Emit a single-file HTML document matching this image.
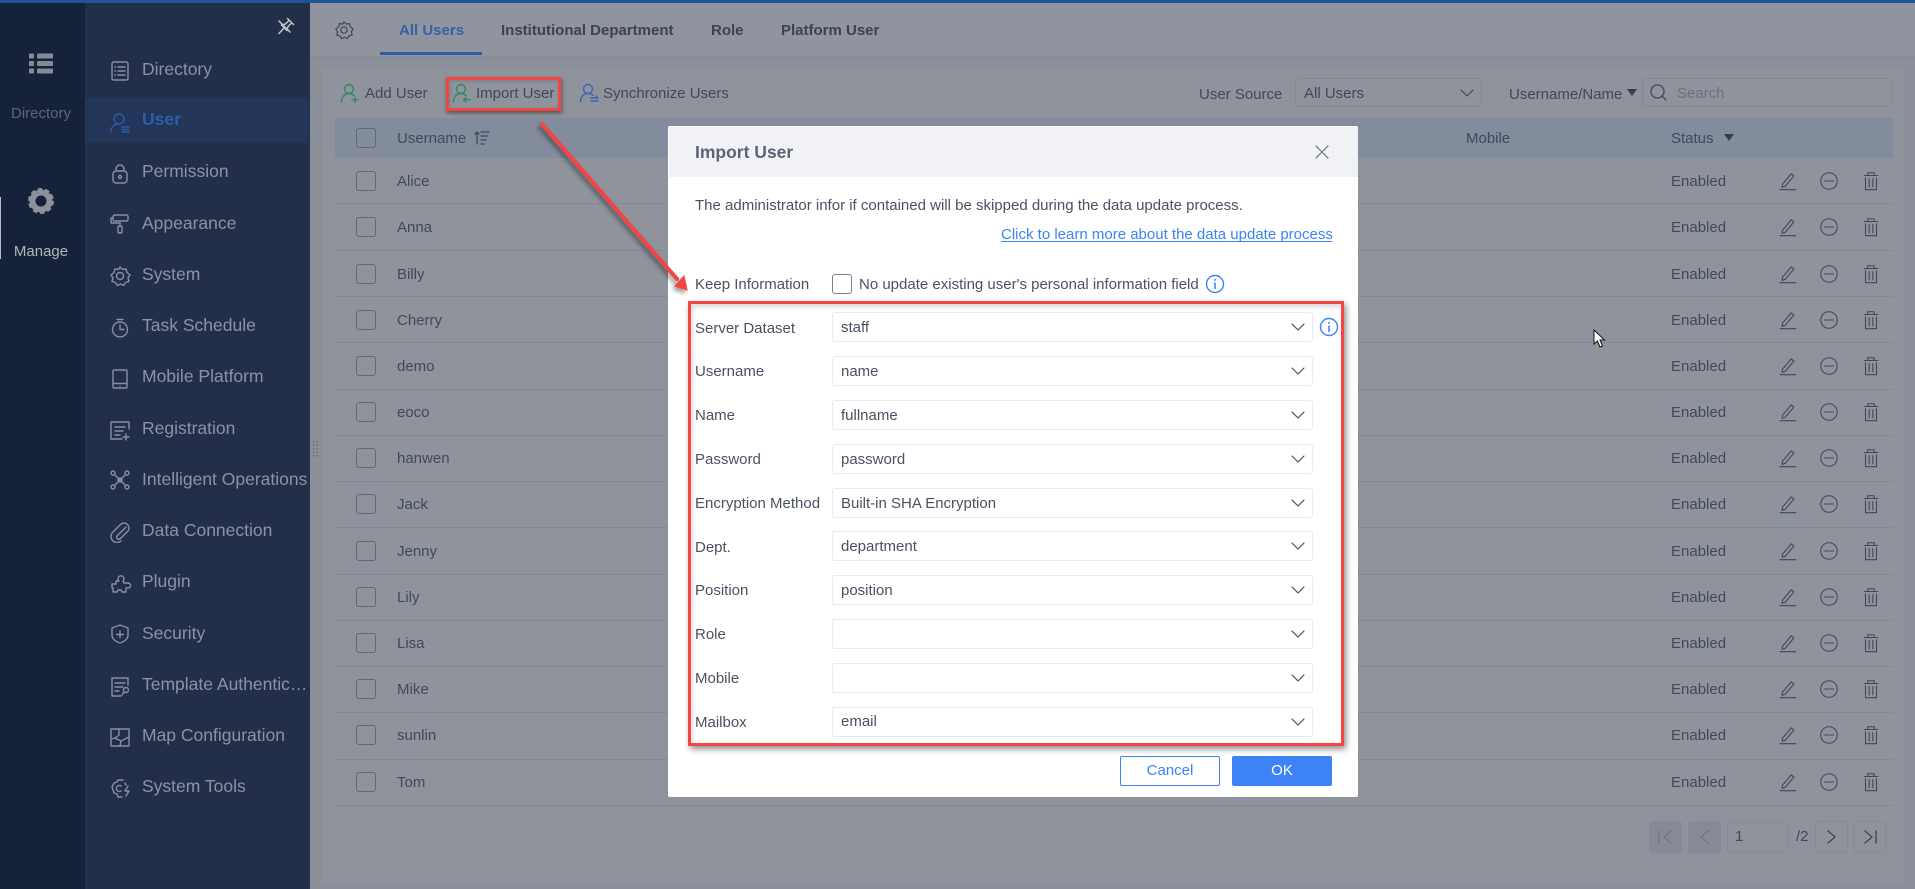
<!DOCTYPE html>
<html><head><meta charset="utf-8"><title>Import User</title>
<style>
*{box-sizing:border-box}
html,body{margin:0;padding:0;width:1915px;height:889px;overflow:hidden;background:#8e939c;font-family:"Liberation Sans",sans-serif}
.a{position:absolute}
.t{position:absolute;white-space:nowrap;line-height:20px;height:20px;font-size:15px;color:#41485b;margin-top:1px}
.nav{font-size:17.5px;color:#8b93a3;left:142px;line-height:24px;height:24px;margin-top:0}
.ic{position:absolute;fill:none;stroke-linecap:round;stroke-linejoin:round}
.nv{stroke:#8790a0;stroke-width:1.4;width:22px;height:22px;left:109px}
.cb{position:absolute;width:20px;height:20px;border:1px solid #62697a;border-radius:3px;left:356px}
.ln{position:absolute;left:335px;width:1558px;height:1px;background:#7f8aa1}
.sel{position:absolute;left:832px;width:481px;height:30px;background:#fff;border:1px solid #e8eaee;border-radius:3px;font-size:15px;line-height:29px;padding-left:8px;color:#4a5162}
.lab{left:695px;color:#4a5162}
.pg{position:absolute;top:821px;height:32px;width:33px;border:1px solid #848b99;border-radius:3px}
</style></head><body>
<svg width="0" height="0" style="position:absolute">
<symbol id="ed" viewBox="-1 -1 24 24"><path d="M5 14.5 14.5 3.2l2.9 2.4-9.5 11.3-3.4 1z"/><path d="M2.5 20.5h17"/></symbol>
<symbol id="mi" viewBox="-1 -1 24 24"><circle cx="11" cy="11" r="9"/><path d="M6 11h10"/></symbol>
<symbol id="tr" viewBox="-1 -1 24 24"><path d="M3.5 5h15M7.500 5V2h7v3M5 7.500V20.500h12V7.500M9 8.500v9M13 8.500v9"/></symbol>
<symbol id="ch" viewBox="0 0 14 8"><path d="M1 1l6 6 6-6"/></symbol>
</svg>

<!-- left rail -->
<div class="a" style="left:0;top:0;width:85px;height:889px;background:#16213a"></div>
<!-- second nav -->
<div class="a" style="left:85px;top:0;width:225px;height:889px;background:#232f48"></div>
<div class="a" style="left:85px;top:98px;width:224px;height:45px;background:#233558"></div>
<!-- top stripe -->
<div class="a" style="left:0;top:0;width:1915px;height:3px;background:#1f5596"></div>

<svg class="a" style="left:28px;top:52px" width="26" height="23"><g fill="#838a98"><rect x="1" y="1.5" width="5" height="5" rx="1"/><rect x="9" y="1.5" width="16" height="5" rx="1"/><rect x="1" y="9" width="5" height="5" rx="1"/><rect x="9" y="9" width="16" height="5" rx="1"/><rect x="1" y="16.500" width="5" height="5" rx="1"/><rect x="9" y="16.500" width="16" height="5" rx="1"/></g></svg>
<div class="t" style="left:0;width:82px;text-align:center;top:103px;color:#5d6677">Directory</div>
<div class="a" style="left:0;top:197px;width:1px;height:62px;background:#b5b9c1"></div>
<svg class="a" style="left:27px;top:187px" width="28" height="28" viewBox="0 0 28 28"><circle cx="14" cy="14" r="8.500" fill="none" stroke="#8b909b" stroke-width="6"/><circle cx="14" cy="14" r="10.500" fill="none" stroke="#8b909b" stroke-width="5" stroke-dasharray="4 2.600"/></svg>
<div class="t" style="left:0;width:82px;text-align:center;top:241px;color:#b1b5bd">Manage</div>

<svg class="ic" style="left:276px;top:16px;stroke:#c2c5cc;stroke-width:1.500" width="20" height="20" viewBox="0 0 20 20"><path d="M11.500 2.500l6 6M13 4.500l-3.500 3.500-4 1 5.500 5.500 1-4 3.500-3.500M7.500 12.500l-4.500 5M3 5l11 11"/></svg>

<!-- sidebar text -->
<div class="t nav" style="top:57px">Directory</div>
<div class="t nav" style="top:107px;color:#2c5ea9;font-weight:bold">User</div>
<div class="t nav" style="top:159px">Permission</div>
<div class="t nav" style="top:211px">Appearance</div>
<div class="t nav" style="top:262px">System</div>
<div class="t nav" style="top:313px">Task Schedule</div>
<div class="t nav" style="top:364px">Mobile Platform</div>
<div class="t nav" style="top:416px">Registration</div>
<div class="t nav" style="top:467px">Intelligent Operations</div>
<div class="t nav" style="top:518px">Data Connection</div>
<div class="t nav" style="top:569px">Plugin</div>
<div class="t nav" style="top:621px">Security</div>
<div class="t nav" style="top:672px">Template Authentic…</div>
<div class="t nav" style="top:723px">Map Configuration</div>
<div class="t nav" style="top:774px">System Tools</div>

<!-- sidebar icons -->
<svg class="ic nv" style="top:60px" viewBox="0 0 22 22"><rect x="3" y="2" width="16" height="18" rx="1.500"/><path d="M9 7h7M9 11h7M9 15h7M6 7h.5M6 11h.5M6 15h.5"/></svg>
<svg class="ic nv" style="top:112px;stroke:#2c5ea9" viewBox="0 0 22 22"><circle cx="10" cy="7" r="5"/><path d="M2 20c0-5 3-8 7-8M13 15h7M13 17.500h7M13 20h7"/></svg>
<svg class="ic nv" style="top:163px" viewBox="0 0 22 22"><rect x="4" y="8" width="14" height="12" rx="3"/><path d="M7 8V6a4 4 0 0 1 8 0v2"/><circle cx="11" cy="14" r="1.500"/></svg>
<svg class="ic nv" style="top:213px" viewBox="0 0 22 22"><rect x="4" y="2" width="15" height="6" rx="1.500"/><path d="M4 5H2v5h9v3"/><rect x="9" y="13" width="4" height="7" rx="1"/></svg>
<svg class="ic nv" style="top:265px" viewBox="0 0 22 22"><path d="M11 2l2.500 2.500 3.500-.5 1 3.500 3 2.500-2 3 1 3.500-3.500 1-2 3-3-1.500-3 1.500-2-3-3.500-1 1-3.500-2-3 3-2.500 1-3.500 3.500.5z"/><circle cx="11" cy="11" r="3.500"/></svg>
<svg class="ic nv" style="top:317px" viewBox="0 0 22 22"><circle cx="11" cy="12.500" r="7.500"/><path d="M11 8v4.500h4M8 2.500h6"/></svg>
<svg class="ic nv" style="top:368px" viewBox="0 0 22 22"><rect x="4" y="2" width="14" height="18" rx="1"/><path d="M4 15.500h14M11 18h.1"/></svg>
<svg class="ic nv" style="top:419px" viewBox="0 0 22 22"><path d="M20 10V3H2v17h11"/><path d="M6 8h10M6 12h8M6 16h5M17 15v6M14 18h6"/></svg>
<svg class="ic nv" style="top:469px" viewBox="0 0 22 22"><circle cx="4" cy="4" r="2"/><circle cx="18" cy="4" r="2"/><circle cx="4" cy="18" r="2"/><circle cx="18" cy="18" r="2"/><circle cx="11" cy="11" r="2"/><path d="M5.500 5.500 16.500 16.500M16.500 5.500 5.500 16.500"/></svg>
<svg class="ic nv" style="top:521px" viewBox="0 0 22 22"><path d="M17 6 8 15a2.200 2.200 0 0 0 3 3l8-8a5 5 0 0 0-7-7L4 11a6 6 0 0 0 8 9"/></svg>
<svg class="ic nv" style="top:572px;left:110px" viewBox="0 0 22 22"><path d="M3 20v-4h-1v-4h4V9h3a3 3 0 1 1 4 0l1 2h4a2.500 2.500 0 0 1 0 5h-2v4h-4l-1-2h-3l-1 2z"/></svg>
<svg class="ic nv" style="top:623px" viewBox="0 0 22 22"><path d="M11 2l8 3v7c0 4-4 7-8 8-4-1-8-4-8-8V5z"/><path d="M11 8v7M7.500 11.500h7"/></svg>
<svg class="ic nv" style="top:675px;left:110px" viewBox="0 0 22 22"><path d="M18 10V3H2v18h9M5 8h10M5 12h8M5 16h4"/><circle cx="16" cy="15" r="2.500"/><path d="M14 17l-2 3"/></svg>
<svg class="ic nv" style="top:726px" viewBox="0 0 22 22"><rect x="2" y="3" width="18" height="17"/><path d="M10 3v6l-4 3-4 1M6 12l6 3 8-4M12 15l-1 5"/></svg>
<svg class="ic nv" style="top:777px;left:110px" viewBox="0 0 22 22"><path d="M13 3H8L7 5 4 6 2 10l1 3 1 3 3 1 1 3h4M16 8l-1-2"/><path d="M11 9a3 3 0 1 0 0 5M18 9l-3 5h4l-3 5"/></svg>

<!-- main background -->
<div class="a" style="left:310px;top:3px;width:1605px;height:886px;background:#8a8f99"></div>
<div class="a" style="left:310px;top:3px;width:1605px;height:53px;background:#8f949e"></div>
<div class="a" style="left:310px;top:56px;width:1605px;height:1px;background:#858a95"></div>
<div class="a" style="left:322px;top:68px;width:1583px;height:815px;background:#8e939c"></div>
<svg class="a" style="left:313px;top:441px" width="6" height="16"><g fill="#6b7180"><rect x="0" y="0" width="1.500" height="1.500"/><rect x="3.500" y="0" width="1.500" height="1.500"/><rect x="0" y="3.500" width="1.500" height="1.500"/><rect x="3.500" y="3.500" width="1.500" height="1.500"/><rect x="0" y="7" width="1.500" height="1.500"/><rect x="3.500" y="7" width="1.500" height="1.500"/><rect x="0" y="10.500" width="1.500" height="1.500"/><rect x="3.500" y="10.500" width="1.500" height="1.500"/><rect x="0" y="14" width="1.500" height="1.500"/><rect x="3.500" y="14" width="1.500" height="1.500"/></g></svg>

<!-- tabs -->
<svg class="ic" style="left:334px;top:20px;stroke:#3f4657;stroke-width:1.300" width="20" height="20" viewBox="0 0 22 22"><path d="M11 2l2.500 2.500 3.500-.5 1 3.500 3 2.500-2 3 1 3.500-3.500 1-2 3-3-1.500-3 1.500-2-3-3.500-1 1-3.500-2-3 3-2.500 1-3.500 3.500.5z"/><circle cx="11" cy="11" r="3.500"/></svg>
<div class="t" style="left:399px;top:20px;font-weight:bold;color:#3761a8">All Users</div>
<div class="a" style="left:380px;top:52px;width:102px;height:3px;background:#2f5ea8"></div>
<div class="t" style="left:501px;top:20px;font-weight:bold;color:#3b4255">Institutional Department</div>
<div class="t" style="left:711px;top:20px;font-weight:bold;color:#3b4255">Role</div>
<div class="t" style="left:781px;top:20px;font-weight:bold;color:#3b4255">Platform User</div>

<!-- toolbar -->
<svg class="ic" style="left:340px;top:83px;stroke:#2d8a5f;stroke-width:1.400" width="20" height="20" viewBox="0 0 20 20"><circle cx="9" cy="6" r="4.500"/><path d="M1.500 19c0-5 3-8.500 7.500-8.500 2 0 3.500.5 5 2"/><path d="M15 14v5.500M12 16.700h6"/></svg>
<div class="t" style="left:365px;top:83px">Add User</div>
<svg class="ic" style="left:452px;top:83px;stroke:#2d8a5f;stroke-width:1.400" width="20" height="20" viewBox="0 0 20 20"><circle cx="9" cy="6" r="4.500"/><path d="M1.500 19c0-5 3-8.500 7.500-8.500 2 0 3.500.5 5 2"/><path d="M18.500 16.700H11.500M14 14.500l-2.500 2.200 2.500 2.200"/></svg>
<div class="t" style="left:476px;top:83px">Import User</div>
<svg class="ic" style="left:579px;top:83px;stroke:#3a66b5;stroke-width:1.400" width="20" height="20" viewBox="0 0 20 20"><circle cx="9" cy="6" r="4.500"/><path d="M1.500 19c0-5 3-8.500 7.500-8.500 2 0 3.500.5 5 2"/><path d="M12 15h7l-2-2M19 18h-7"/></svg>
<div class="t" style="left:603px;top:83px">Synchronize Users</div>
<div class="t" style="left:1199px;top:84px">User Source</div>
<div class="a" style="left:1295px;top:78px;width:187px;height:29px;border:1px solid #828997;border-radius:3px"></div>
<div class="t" style="left:1304px;top:83px">All Users</div>
<svg class="ic" style="left:1460px;top:89px;stroke:#41485b;stroke-width:1.200" width="14" height="8"><use href="#ch"/></svg>
<div class="t" style="left:1509px;top:84px">Username/Name</div>
<div class="a" style="left:1627px;top:89px;border-left:5px solid transparent;border-right:5px solid transparent;border-top:7px solid #363d50"></div>
<div class="a" style="left:1642px;top:78px;width:250px;height:29px;border:1px solid #828997;border-radius:3px"></div>
<svg class="ic" style="left:1649px;top:83px;stroke:#41485b;stroke-width:1.300" width="19" height="19"><circle cx="8.500" cy="8.500" r="6.500"/><path d="M13 13l4 4"/></svg>
<div class="t" style="left:1677px;top:83px;color:#6a7180">Search</div>

<!-- table head -->
<div class="a" style="left:335px;top:118px;width:1558px;height:40px;background:#828c9d"></div>
<div class="cb" style="top:128px"></div>
<div class="t" style="left:397px;top:128px">Username</div>
<svg class="ic" style="left:474px;top:130px;stroke:#41485b;stroke-width:1.300" width="16" height="15"><path d="M3 14V2M1 4l2-2 2 2M7 2h8M7 6h6.500M7 10h5M7 14h3"/></svg>
<div class="t" style="left:1466px;top:128px">Mobile</div>
<div class="t" style="left:1671px;top:128px">Status</div>
<div class="a" style="left:1724px;top:134px;border-left:5.500px solid transparent;border-right:5.500px solid transparent;border-top:7px solid #363d50"></div>

<!-- rows -->
<div class="cb" style="top:171px"></div><div class="t" style="left:397px;top:171px">Alice</div><div class="t" style="left:1671px;top:171px">Enabled</div><svg class="ic" style="left:1777px;top:170px;stroke:#41485b;stroke-width:1.200" width="22" height="22"><use href="#ed"/></svg><svg class="ic" style="left:1818px;top:170px;stroke:#41485b;stroke-width:1.200" width="22" height="22"><use href="#mi"/></svg><svg class="ic" style="left:1860px;top:170px;stroke:#41485b;stroke-width:1.200" width="22" height="22"><use href="#tr"/></svg><div class="ln" style="top:203px"></div>
<div class="cb" style="top:217px"></div><div class="t" style="left:397px;top:217px">Anna</div><div class="t" style="left:1671px;top:217px">Enabled</div><svg class="ic" style="left:1777px;top:216px;stroke:#41485b;stroke-width:1.200" width="22" height="22"><use href="#ed"/></svg><svg class="ic" style="left:1818px;top:216px;stroke:#41485b;stroke-width:1.200" width="22" height="22"><use href="#mi"/></svg><svg class="ic" style="left:1860px;top:216px;stroke:#41485b;stroke-width:1.200" width="22" height="22"><use href="#tr"/></svg><div class="ln" style="top:250px"></div>
<div class="cb" style="top:264px"></div><div class="t" style="left:397px;top:264px">Billy</div><div class="t" style="left:1671px;top:264px">Enabled</div><svg class="ic" style="left:1777px;top:263px;stroke:#41485b;stroke-width:1.200" width="22" height="22"><use href="#ed"/></svg><svg class="ic" style="left:1818px;top:263px;stroke:#41485b;stroke-width:1.200" width="22" height="22"><use href="#mi"/></svg><svg class="ic" style="left:1860px;top:263px;stroke:#41485b;stroke-width:1.200" width="22" height="22"><use href="#tr"/></svg><div class="ln" style="top:296px"></div>
<div class="cb" style="top:310px"></div><div class="t" style="left:397px;top:310px">Cherry</div><div class="t" style="left:1671px;top:310px">Enabled</div><svg class="ic" style="left:1777px;top:309px;stroke:#41485b;stroke-width:1.200" width="22" height="22"><use href="#ed"/></svg><svg class="ic" style="left:1818px;top:309px;stroke:#41485b;stroke-width:1.200" width="22" height="22"><use href="#mi"/></svg><svg class="ic" style="left:1860px;top:309px;stroke:#41485b;stroke-width:1.200" width="22" height="22"><use href="#tr"/></svg><div class="ln" style="top:342px"></div>
<div class="cb" style="top:356px"></div><div class="t" style="left:397px;top:356px">demo</div><div class="t" style="left:1671px;top:356px">Enabled</div><svg class="ic" style="left:1777px;top:355px;stroke:#41485b;stroke-width:1.200" width="22" height="22"><use href="#ed"/></svg><svg class="ic" style="left:1818px;top:355px;stroke:#41485b;stroke-width:1.200" width="22" height="22"><use href="#mi"/></svg><svg class="ic" style="left:1860px;top:355px;stroke:#41485b;stroke-width:1.200" width="22" height="22"><use href="#tr"/></svg><div class="ln" style="top:389px"></div>
<div class="cb" style="top:402px"></div><div class="t" style="left:397px;top:402px">eoco</div><div class="t" style="left:1671px;top:402px">Enabled</div><svg class="ic" style="left:1777px;top:401px;stroke:#41485b;stroke-width:1.200" width="22" height="22"><use href="#ed"/></svg><svg class="ic" style="left:1818px;top:401px;stroke:#41485b;stroke-width:1.200" width="22" height="22"><use href="#mi"/></svg><svg class="ic" style="left:1860px;top:401px;stroke:#41485b;stroke-width:1.200" width="22" height="22"><use href="#tr"/></svg><div class="ln" style="top:435px"></div>
<div class="cb" style="top:448px"></div><div class="t" style="left:397px;top:448px">hanwen</div><div class="t" style="left:1671px;top:448px">Enabled</div><svg class="ic" style="left:1777px;top:447px;stroke:#41485b;stroke-width:1.200" width="22" height="22"><use href="#ed"/></svg><svg class="ic" style="left:1818px;top:447px;stroke:#41485b;stroke-width:1.200" width="22" height="22"><use href="#mi"/></svg><svg class="ic" style="left:1860px;top:447px;stroke:#41485b;stroke-width:1.200" width="22" height="22"><use href="#tr"/></svg><div class="ln" style="top:481px"></div>
<div class="cb" style="top:494px"></div><div class="t" style="left:397px;top:494px">Jack</div><div class="t" style="left:1671px;top:494px">Enabled</div><svg class="ic" style="left:1777px;top:493px;stroke:#41485b;stroke-width:1.200" width="22" height="22"><use href="#ed"/></svg><svg class="ic" style="left:1818px;top:493px;stroke:#41485b;stroke-width:1.200" width="22" height="22"><use href="#mi"/></svg><svg class="ic" style="left:1860px;top:493px;stroke:#41485b;stroke-width:1.200" width="22" height="22"><use href="#tr"/></svg><div class="ln" style="top:527px"></div>
<div class="cb" style="top:541px"></div><div class="t" style="left:397px;top:541px">Jenny</div><div class="t" style="left:1671px;top:541px">Enabled</div><svg class="ic" style="left:1777px;top:540px;stroke:#41485b;stroke-width:1.200" width="22" height="22"><use href="#ed"/></svg><svg class="ic" style="left:1818px;top:540px;stroke:#41485b;stroke-width:1.200" width="22" height="22"><use href="#mi"/></svg><svg class="ic" style="left:1860px;top:540px;stroke:#41485b;stroke-width:1.200" width="22" height="22"><use href="#tr"/></svg><div class="ln" style="top:574px"></div>
<div class="cb" style="top:587px"></div><div class="t" style="left:397px;top:587px">Lily</div><div class="t" style="left:1671px;top:587px">Enabled</div><svg class="ic" style="left:1777px;top:586px;stroke:#41485b;stroke-width:1.200" width="22" height="22"><use href="#ed"/></svg><svg class="ic" style="left:1818px;top:586px;stroke:#41485b;stroke-width:1.200" width="22" height="22"><use href="#mi"/></svg><svg class="ic" style="left:1860px;top:586px;stroke:#41485b;stroke-width:1.200" width="22" height="22"><use href="#tr"/></svg><div class="ln" style="top:620px"></div>
<div class="cb" style="top:633px"></div><div class="t" style="left:397px;top:633px">Lisa</div><div class="t" style="left:1671px;top:633px">Enabled</div><svg class="ic" style="left:1777px;top:632px;stroke:#41485b;stroke-width:1.200" width="22" height="22"><use href="#ed"/></svg><svg class="ic" style="left:1818px;top:632px;stroke:#41485b;stroke-width:1.200" width="22" height="22"><use href="#mi"/></svg><svg class="ic" style="left:1860px;top:632px;stroke:#41485b;stroke-width:1.200" width="22" height="22"><use href="#tr"/></svg><div class="ln" style="top:666px"></div>
<div class="cb" style="top:679px"></div><div class="t" style="left:397px;top:679px">Mike</div><div class="t" style="left:1671px;top:679px">Enabled</div><svg class="ic" style="left:1777px;top:678px;stroke:#41485b;stroke-width:1.200" width="22" height="22"><use href="#ed"/></svg><svg class="ic" style="left:1818px;top:678px;stroke:#41485b;stroke-width:1.200" width="22" height="22"><use href="#mi"/></svg><svg class="ic" style="left:1860px;top:678px;stroke:#41485b;stroke-width:1.200" width="22" height="22"><use href="#tr"/></svg><div class="ln" style="top:712px"></div>
<div class="cb" style="top:725px"></div><div class="t" style="left:397px;top:725px">sunlin</div><div class="t" style="left:1671px;top:725px">Enabled</div><svg class="ic" style="left:1777px;top:724px;stroke:#41485b;stroke-width:1.200" width="22" height="22"><use href="#ed"/></svg><svg class="ic" style="left:1818px;top:724px;stroke:#41485b;stroke-width:1.200" width="22" height="22"><use href="#mi"/></svg><svg class="ic" style="left:1860px;top:724px;stroke:#41485b;stroke-width:1.200" width="22" height="22"><use href="#tr"/></svg><div class="ln" style="top:759px"></div>
<div class="cb" style="top:772px"></div><div class="t" style="left:397px;top:772px">Tom</div><div class="t" style="left:1671px;top:772px">Enabled</div><svg class="ic" style="left:1777px;top:771px;stroke:#41485b;stroke-width:1.200" width="22" height="22"><use href="#ed"/></svg><svg class="ic" style="left:1818px;top:771px;stroke:#41485b;stroke-width:1.200" width="22" height="22"><use href="#mi"/></svg><svg class="ic" style="left:1860px;top:771px;stroke:#41485b;stroke-width:1.200" width="22" height="22"><use href="#tr"/></svg><div class="ln" style="top:805px"></div>

<!-- pagination -->
<div class="pg" style="left:1649px;background:#858a96"></div>
<svg class="ic" style="left:1657px;top:828px;stroke:#6f7685;stroke-width:1.400" width="18" height="18"><path d="M2 3v12M14 3 7 9l7 6"/></svg>
<div class="pg" style="left:1688px;background:#858a96"></div>
<svg class="ic" style="left:1698px;top:828px;stroke:#6f7685;stroke-width:1.400" width="14" height="18"><path d="M10 3 3 9l7 6"/></svg>
<div class="a" style="left:1727px;top:822px;width:62px;height:30px;border:1px solid #848b99;border-radius:3px"></div>
<div class="t" style="left:1735px;top:826px">1</div>
<div class="t" style="left:1796px;top:826px">/2</div>
<div class="pg" style="left:1815px"></div>
<svg class="ic" style="left:1825px;top:828px;stroke:#41485b;stroke-width:1.400" width="14" height="18"><path d="M3 3l7 6-7 6"/></svg>
<div class="pg" style="left:1853px"></div>
<svg class="ic" style="left:1863px;top:828px;stroke:#41485b;stroke-width:1.400" width="18" height="18"><path d="M2 3l7 6-7 6M13 3v12"/></svg>

<!-- cursor -->
<svg class="a" style="left:1593px;top:329px" width="14" height="20"><path d="M1 1v14l3.500-3 2.500 6 2.500-1-2.500-6h4.500z" fill="#fff" stroke="#111" stroke-width="1"/></svg>

<!-- red box around Import User -->
<div class="a" style="left:446px;top:77px;width:115px;height:34px;border:3px solid #f44444;box-shadow:1px 2px 4px rgba(0,0,0,.45),inset 1px 1px 3px rgba(0,0,0,.15)"></div>

<!-- modal -->
<div class="a" style="left:668px;top:126px;width:690px;height:671px;background:#fff;border-radius:2px"></div>
<div class="a" style="left:669px;top:127px;width:689px;height:50px;background:#f1f2f6"></div>
<div class="t" style="left:695px;top:142px;margin-top:0;font-size:17.500px;font-weight:bold;color:#5b6475">Import User</div>
<svg class="ic" style="left:1315px;top:145px;stroke:#6b7280;stroke-width:1.200" width="14" height="14"><path d="M1 1l12 12M13 1 1 13"/></svg>
<div class="t" style="left:695px;top:195px;color:#4a5162">The administrator infor if contained will be skipped during the data update process.</div>
<div class="t" style="left:1001px;top:224px;color:#3d83f6">Click to learn more about the data update process</div>
<div class="a" style="left:1001px;top:241px;width:331px;height:1px;background:#3d83f6"></div>
<div class="t lab" style="top:274px">Keep Information</div>
<div class="a" style="left:832px;top:274px;width:20px;height:20px;border:1px solid #7a8190;border-radius:3px"></div>
<div class="t" style="left:859px;top:274px;color:#4a5162">No update existing user's personal information field</div>
<svg class="a" style="left:1205px;top:274px" width="20" height="20" viewBox="0 0 20 20"><circle cx="10" cy="10" r="8.500" fill="none" stroke="#3d83f6" stroke-width="1.400"/><rect x="9.200" y="8.500" width="1.600" height="6.500" fill="#3d83f6"/><rect x="9.200" y="5" width="1.600" height="1.800" fill="#3d83f6"/></svg>

<div class="t lab" style="top:318px">Server Dataset</div><div class="sel" style="top:312px">staff</div>
<div class="t lab" style="top:361px">Username</div><div class="sel" style="top:356px">name</div>
<div class="t lab" style="top:405px">Name</div><div class="sel" style="top:400px">fullname</div>
<div class="t lab" style="top:449px">Password</div><div class="sel" style="top:444px">password</div>
<div class="t lab" style="top:493px">Encryption Method</div><div class="sel" style="top:488px">Built-in SHA Encryption</div>
<div class="t lab" style="top:537px">Dept.</div><div class="sel" style="top:531px">department</div>
<div class="t lab" style="top:580px">Position</div><div class="sel" style="top:575px">position</div>
<div class="t lab" style="top:624px">Role</div><div class="sel" style="top:619px"></div>
<div class="t lab" style="top:668px">Mobile</div><div class="sel" style="top:663px"></div>
<div class="t lab" style="top:712px">Mailbox</div><div class="sel" style="top:707px"></div>
<div class="t" style="left:841px;top:711px;color:#4a5162">email</div>

<svg class="ic" style="left:1291px;top:323px;stroke:#4a5162;stroke-width:1.200" width="14" height="8"><use href="#ch"/></svg>
<svg class="ic" style="left:1291px;top:367px;stroke:#4a5162;stroke-width:1.200" width="14" height="8"><use href="#ch"/></svg>
<svg class="ic" style="left:1291px;top:411px;stroke:#4a5162;stroke-width:1.200" width="14" height="8"><use href="#ch"/></svg>
<svg class="ic" style="left:1291px;top:455px;stroke:#4a5162;stroke-width:1.200" width="14" height="8"><use href="#ch"/></svg>
<svg class="ic" style="left:1291px;top:499px;stroke:#4a5162;stroke-width:1.200" width="14" height="8"><use href="#ch"/></svg>
<svg class="ic" style="left:1291px;top:542px;stroke:#4a5162;stroke-width:1.200" width="14" height="8"><use href="#ch"/></svg>
<svg class="ic" style="left:1291px;top:586px;stroke:#4a5162;stroke-width:1.200" width="14" height="8"><use href="#ch"/></svg>
<svg class="ic" style="left:1291px;top:630px;stroke:#4a5162;stroke-width:1.200" width="14" height="8"><use href="#ch"/></svg>
<svg class="ic" style="left:1291px;top:674px;stroke:#4a5162;stroke-width:1.200" width="14" height="8"><use href="#ch"/></svg>
<svg class="ic" style="left:1291px;top:718px;stroke:#4a5162;stroke-width:1.200" width="14" height="8"><use href="#ch"/></svg>
<svg class="a" style="left:1319px;top:317px" width="20" height="20" viewBox="0 0 20 20"><circle cx="10" cy="10" r="8.500" fill="none" stroke="#3d83f6" stroke-width="1.400"/><rect x="9.200" y="8.500" width="1.600" height="6.500" fill="#3d83f6"/><rect x="9.200" y="5" width="1.600" height="1.800" fill="#3d83f6"/></svg>

<div class="a" style="left:1120px;top:756px;width:100px;height:30px;border:1px solid #3d83f6;border-radius:2px;color:#3d83f6;font-size:15px;line-height:28px;text-align:center">Cancel</div>
<div class="a" style="left:1232px;top:756px;width:100px;height:30px;background:#3d83f6;border-radius:2px;color:#fff;font-size:15px;line-height:30px;text-align:center">OK</div>

<!-- red highlight -->
<div class="a" style="left:688px;top:301px;width:656px;height:445px;border:3px solid #f44444;box-shadow:2px 3px 6px rgba(0,0,0,.45),inset 2px 3px 5px rgba(0,0,0,.15)"></div>

<!-- arrow -->
<svg class="a" style="left:0;top:0;filter:drop-shadow(-2px 3px 2px rgba(0,0,0,.4))" width="1915" height="889"><path d="M542 124 677 279" stroke="#f44444" stroke-width="4" stroke-linecap="round" fill="none"/><path d="M687 290 675 286 684 276z" fill="#f44444" stroke="#f44444" stroke-width="1"/></svg>
</body></html>
